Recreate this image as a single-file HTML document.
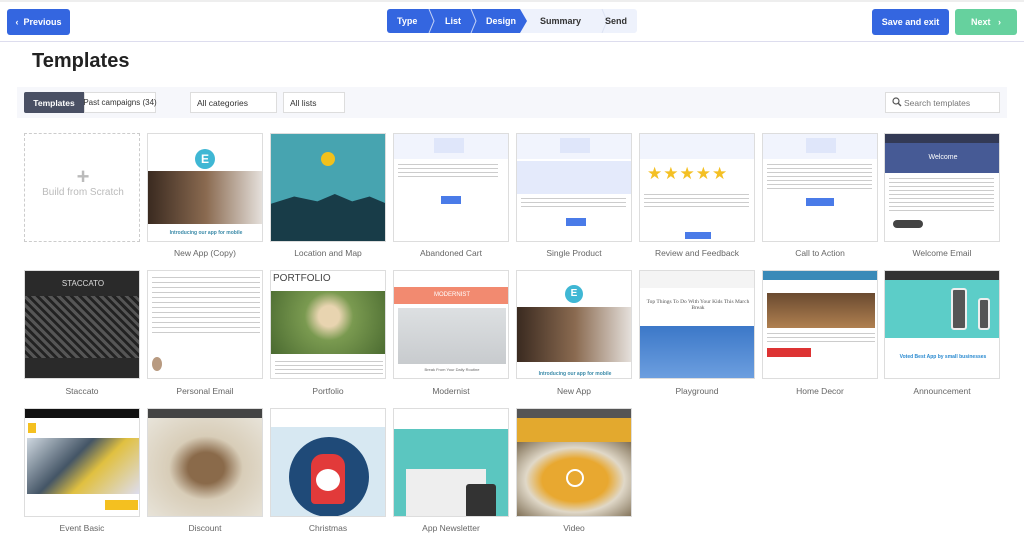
<!DOCTYPE html>
<html><head><style>
*{margin:0;padding:0;box-sizing:border-box}
body{width:1024px;height:545px;background:#fff;font-family:"Liberation Sans",sans-serif;position:relative;overflow:hidden}
.a{position:absolute}
.btn{position:absolute;top:9px;height:26px;border-radius:3px;color:#fff;font-size:9px;font-weight:bold;display:flex;align-items:center;justify-content:center}
.c{position:absolute;width:116px;height:109px;border:1px solid #ddd;overflow:hidden;background:#fff}
.l{position:absolute;width:116px;text-align:center;font-size:8.5px;color:#666}
.c div{position:absolute}
.sep{position:absolute;top:9px;width:6px;height:24px;border-right:1px solid rgba(255,255,255,.7);clip-path:polygon(0 0,100% 50%,0 100%)}
</style></head><body>
<div class="a" style="left:0;top:0;width:1024px;height:2px;background:#eee"></div>
<div class="a" style="left:0;top:41px;width:1024px;height:1px;background:#dde"></div>
<div class="btn" style="left:7px;width:63px;background:#3466e0">‹&nbsp; Previous</div>
<div class="btn" style="left:872px;width:77px;background:#3466e0">Save and exit</div>
<div class="btn" style="left:955px;width:62px;background:#66d19e">Next &nbsp;&nbsp;›</div>
<div class="a" style="left:387px;top:9px;width:250px;height:24px;background:#eef2fc;border-radius:3px"></div>
<div class="a" style="left:387px;top:9px;width:140px;height:24px;background:#3466e0;border-radius:3px 0 0 3px;clip-path:polygon(0 0,95% 0,100% 50%,95% 100%,0 100%)"></div>
<svg class="a" style="left:387px;top:9px" width="250" height="24"><polyline points="42,0 47,12 42,24" fill="none" stroke="#fff" stroke-width="1" opacity=".7"/><polyline points="84,0 89,12 84,24" fill="none" stroke="#fff" stroke-width="1" opacity=".7"/><polyline points="215,0 220,12 215,24" fill="none" stroke="#dde3f3" stroke-width="1"/></svg>
<div class="a" style="left:397px;top:16px;font-size:9px;color:#fff;font-weight:bold">Type</div>
<div class="a" style="left:445px;top:16px;font-size:9px;color:#fff;font-weight:bold">List</div>
<div class="a" style="left:486px;top:16px;font-size:9px;color:#fff;font-weight:bold">Design</div>
<div class="a" style="left:540px;top:16px;font-size:9px;color:#333;font-weight:bold">Summary</div>
<div class="a" style="left:605px;top:16px;font-size:9px;color:#333;font-weight:bold">Send</div>
<div class="a" style="left:32px;top:50px;font-size:20px;font-weight:bold;color:#222">Templates</div>
<div class="a" style="left:17px;top:87px;width:990px;height:31px;background:#f6f7fb"></div>
<div class="a" style="left:24px;top:92px;width:60px;height:21px;background:#4a5064;color:#fff;font-size:8.5px;font-weight:bold;display:flex;align-items:center;justify-content:center;border-radius:2px 0 0 2px">Templates</div>
<div class="a" style="left:84px;top:92px;width:72px;height:21px;background:#fff;border:1px solid #ddd;font-size:8px;color:#333;display:flex;align-items:center;justify-content:center;white-space:nowrap">Past campaigns (34)</div>
<div class="a" style="left:190px;top:92px;width:87px;height:21px;background:#fff;border:1px solid #ddd;font-size:8.5px;color:#333;padding:5px 6px">All categories</div>
<div class="a" style="left:283px;top:92px;width:62px;height:21px;background:#fff;border:1px solid #ddd;font-size:8.5px;color:#333;padding:5px 6px">All lists</div>
<div class="a" style="left:885px;top:92px;width:115px;height:21px;background:#fff;border:1px solid #ddd;font-size:8.5px;color:#777;padding:5px 6px 5px 18px">Search templates</div>
<svg class="a" style="left:892px;top:97px" width="10" height="10"><circle cx="4" cy="4" r="3" fill="none" stroke="#555" stroke-width="1.2"/><line x1="6.2" y1="6.2" x2="9" y2="9" stroke="#555" stroke-width="1.4"/></svg>

<!-- row 1 -->
<div class="c" style="left:24px;top:133px;border:1px dashed #ccc"><div style="left:0;top:30px;width:116px;text-align:center;font-size:22px;color:#bbb;font-weight:bold">+</div><div style="left:0;top:53px;width:116px;text-align:center;font-size:10px;color:#bbb">Build from Scratch</div></div>
<div class="c" style="left:147px;top:133px"><div style="left:47px;top:15px;width:20px;height:20px;border-radius:50%;background:#3fb7d4;color:#fff;font-size:12px;font-weight:bold;text-align:center;line-height:20px">E</div><div style="left:0;top:37px;width:116px;height:53px;background:linear-gradient(90deg,#3a2a20,#8a6a50 50%,#e8e4e0)"></div><div style="left:0;top:96px;width:116px;text-align:center;font-size:5px;color:#3a8aa8;font-weight:bold">Introducing our app for mobile</div></div>
<div class="c" style="left:270px;top:133px;background:#47a4b0"><div style="left:0;top:60px;width:116px;height:49px;background:#183c48;clip-path:polygon(0 20%,20% 5%,40% 15%,55% 0,70% 15%,85% 5%,100% 20%,100% 100%,0 100%)"></div><div style="left:50px;top:18px;width:14px;height:14px;border-radius:50%;background:#f2c11b"></div></div>
<div class="c" style="left:393px;top:133px"><div style="left:0;top:0;width:116px;height:25px;background:#f1f4fd"></div><div style="left:40px;top:4px;width:30px;height:15px;background:#dfe6fa"></div><div style="left:4px;top:30px;width:100px;height:16px;background:repeating-linear-gradient(#ccc 0 1px,transparent 1px 4px)"></div><div style="left:47px;top:62px;width:20px;height:8px;background:#4a7be8"></div></div>
<div class="c" style="left:516px;top:133px"><div style="left:0;top:0;width:116px;height:25px;background:#f1f4fd"></div><div style="left:43px;top:4px;width:30px;height:15px;background:#dfe6fa"></div><div style="left:0;top:27px;width:116px;height:33px;background:#e4eafb"></div><div style="left:4px;top:64px;width:105px;height:12px;background:repeating-linear-gradient(#ccc 0 1px,transparent 1px 4px)"></div><div style="left:49px;top:84px;width:20px;height:8px;background:#4a7be8"></div></div>
<div class="c" style="left:639px;top:133px"><div style="left:0;top:0;width:116px;height:25px;background:#f1f4fd"></div><div style="left:7px;top:30px;width:105px;font-size:17px;color:#f4c024;letter-spacing:1px">★★★★★</div><div style="left:4px;top:60px;width:105px;height:14px;background:repeating-linear-gradient(#ccc 0 1px,transparent 1px 4px)"></div><div style="left:45px;top:98px;width:26px;height:7px;background:#4a7be8"></div></div>
<div class="c" style="left:762px;top:133px"><div style="left:0;top:0;width:116px;height:25px;background:#f1f4fd"></div><div style="left:43px;top:4px;width:30px;height:15px;background:#dfe6fa"></div><div style="left:4px;top:30px;width:105px;height:28px;background:repeating-linear-gradient(#ccc 0 1px,transparent 1px 4px)"></div><div style="left:43px;top:64px;width:28px;height:8px;background:#4a7be8"></div></div>
<div class="c" style="left:884px;top:133px"><div style="left:0;top:0;width:116px;height:9px;background:#333a55"></div><div style="left:0;top:9px;width:116px;height:30px;background:#465a95;color:#fff;font-size:7px;text-align:center;line-height:30px">Welcome</div><div style="left:4px;top:44px;width:105px;height:35px;background:repeating-linear-gradient(#ccc 0 1px,transparent 1px 4px)"></div><div style="left:8px;top:86px;width:30px;height:8px;background:#444;border-radius:4px"></div></div>
<div class="l" style="left:147px;top:248px">New App (Copy)</div>
<div class="l" style="left:270px;top:248px">Location and Map</div>
<div class="l" style="left:393px;top:248px">Abandoned Cart</div>
<div class="l" style="left:516px;top:248px">Single Product</div>
<div class="l" style="left:639px;top:248px">Review and Feedback</div>
<div class="l" style="left:762px;top:248px">Call to Action</div>
<div class="l" style="left:884px;top:248px">Welcome Email</div>

<!-- row 2 -->
<div class="c" style="left:24px;top:270px;background:#2a2a2a"><div style="left:0;top:25px;width:116px;height:62px;background:repeating-linear-gradient(45deg,#555 0 3px,#222 3px 6px)"></div><div style="left:0;top:8px;width:116px;text-align:center;color:#ddd;font-size:8px">STACCATO</div></div>
<div class="c" style="left:147px;top:270px"><div style="left:4px;top:6px;width:108px;height:60px;background:repeating-linear-gradient(#ccc 0 1px,transparent 1px 5px)"></div><div style="left:4px;top:86px;width:10px;height:14px;background:#b89a80;border-radius:50%"></div></div>
<div class="c" style="left:270px;top:270px"><div style="left:2px;top:2px;font-size:10px;color:#444">PORTFOLIO</div><div style="left:0;top:20px;width:116px;height:63px;background:radial-gradient(circle at 50% 40%,#e8d4b0 0 15%,#7a9a50 35%,#4a6a30)"></div><div style="left:4px;top:90px;width:108px;height:14px;background:repeating-linear-gradient(#ccc 0 1px,transparent 1px 4px)"></div></div>
<div class="c" style="left:393px;top:270px"><div style="left:0;top:16px;width:116px;height:17px;background:#f28a70;color:#fff;font-size:6px;text-align:center;line-height:17px">MODERNIST</div><div style="left:4px;top:37px;width:108px;height:56px;background:linear-gradient(#dde0e2,#c8cbce)"></div><div style="left:0;top:96px;width:116px;text-align:center;font-size:4px;color:#666">Break From Your Daily Routine</div></div>
<div class="c" style="left:516px;top:270px"><div style="left:48px;top:14px;width:18px;height:18px;border-radius:50%;background:#3fb7d4;color:#fff;font-size:10px;font-weight:bold;text-align:center;line-height:18px">E</div><div style="left:0;top:36px;width:116px;height:55px;background:linear-gradient(90deg,#3a2a20,#8a6a50 50%,#e8e4e0)"></div><div style="left:0;top:100px;width:116px;text-align:center;font-size:5px;color:#3a8aa8;font-weight:bold">Introducing our app for mobile</div></div>
<div class="c" style="left:639px;top:270px"><div style="left:0;top:0;width:116px;height:17px;background:#f4f4f4"></div><div style="left:0;top:28px;width:116px;text-align:center;font-size:5.5px;color:#555;font-family:'Liberation Serif',serif">Top Things To Do With Your Kids This March Break</div><div style="left:0;top:55px;width:116px;height:54px;background:linear-gradient(#3c78c8,#6ea0e0)"></div></div>
<div class="c" style="left:762px;top:270px"><div style="left:0;top:0;width:116px;height:9px;background:#3a8ab8"></div><div style="left:4px;top:22px;width:108px;height:35px;background:linear-gradient(#6a4a30,#b08050)"></div><div style="left:4px;top:62px;width:108px;height:12px;background:repeating-linear-gradient(#ccc 0 1px,transparent 1px 4px)"></div><div style="left:4px;top:77px;width:44px;height:9px;background:#d33"></div></div>
<div class="c" style="left:884px;top:270px"><div style="left:0;top:0;width:116px;height:9px;background:#333"></div><div style="left:0;top:9px;width:116px;height:58px;background:#5ccdc8"></div><div style="left:66px;top:17px;width:16px;height:42px;background:#555;border:2px solid #eee;border-radius:3px"></div><div style="left:93px;top:27px;width:12px;height:32px;background:#555;border:2px solid #eee;border-radius:3px"></div><div style="left:0;top:83px;width:116px;text-align:center;font-size:5px;color:#2a8ad0;font-weight:bold">Voted Best App by small businesses</div></div>
<div class="l" style="left:24px;top:386px">Staccato</div>
<div class="l" style="left:147px;top:386px">Personal Email</div>
<div class="l" style="left:270px;top:386px">Portfolio</div>
<div class="l" style="left:393px;top:386px">Modernist</div>
<div class="l" style="left:516px;top:386px">New App</div>
<div class="l" style="left:639px;top:386px">Playground</div>
<div class="l" style="left:762px;top:386px">Home Decor</div>
<div class="l" style="left:884px;top:386px">Announcement</div>

<!-- row 3 -->
<div class="c" style="left:24px;top:408px"><div style="left:0;top:0;width:116px;height:9px;background:#111"></div><div style="left:3px;top:14px;width:8px;height:10px;background:#f4c020"></div><div style="left:2px;top:29px;width:112px;height:56px;background:linear-gradient(135deg,#cfd8e0,#456 40%,#e0c040 60%,#dde)"></div><div style="left:80px;top:91px;width:33px;height:10px;background:#f4c020"></div></div>
<div class="c" style="left:147px;top:408px"><div style="left:0;top:0;width:116px;height:9px;background:#444"></div><div style="left:0;top:9px;width:116px;height:100px;background:radial-gradient(ellipse at 50% 50%,#8a6a4a 0 22%,#d8cdb8 45%,#e8e4da)"></div></div>
<div class="c" style="left:270px;top:408px"><div style="left:0;top:18px;width:116px;height:91px;background:#d7e8f2"></div><div style="left:18px;top:28px;width:80px;height:80px;border-radius:50%;background:#1f4a78"></div><div style="left:40px;top:45px;width:34px;height:50px;background:#e23a3a;border-radius:12px 12px 4px 4px"></div><div style="left:45px;top:60px;width:24px;height:22px;background:#fff;border-radius:50%"></div></div>
<div class="c" style="left:393px;top:408px"><div style="left:0;top:20px;width:116px;height:89px;background:#5bc6c0"></div><div style="left:12px;top:60px;width:80px;height:49px;background:#eee"></div><div style="left:72px;top:75px;width:30px;height:34px;background:#333;border-radius:3px"></div></div>
<div class="c" style="left:516px;top:408px"><div style="left:0;top:0;width:116px;height:9px;background:#555"></div><div style="left:0;top:9px;width:116px;height:24px;background:#e3a92e"></div><div style="left:0;top:33px;width:116px;height:76px;background:radial-gradient(ellipse at 50% 50%,#e8a830 0 40%,#e0d8c8 60%,#7a6a50)"></div><div style="left:49px;top:60px;width:18px;height:18px;border:2px solid #fff;border-radius:50%"></div></div>
<div class="l" style="left:24px;top:523px">Event Basic</div>
<div class="l" style="left:147px;top:523px">Discount</div>
<div class="l" style="left:270px;top:523px">Christmas</div>
<div class="l" style="left:393px;top:523px">App Newsletter</div>
<div class="l" style="left:516px;top:523px">Video</div>
</body></html>
